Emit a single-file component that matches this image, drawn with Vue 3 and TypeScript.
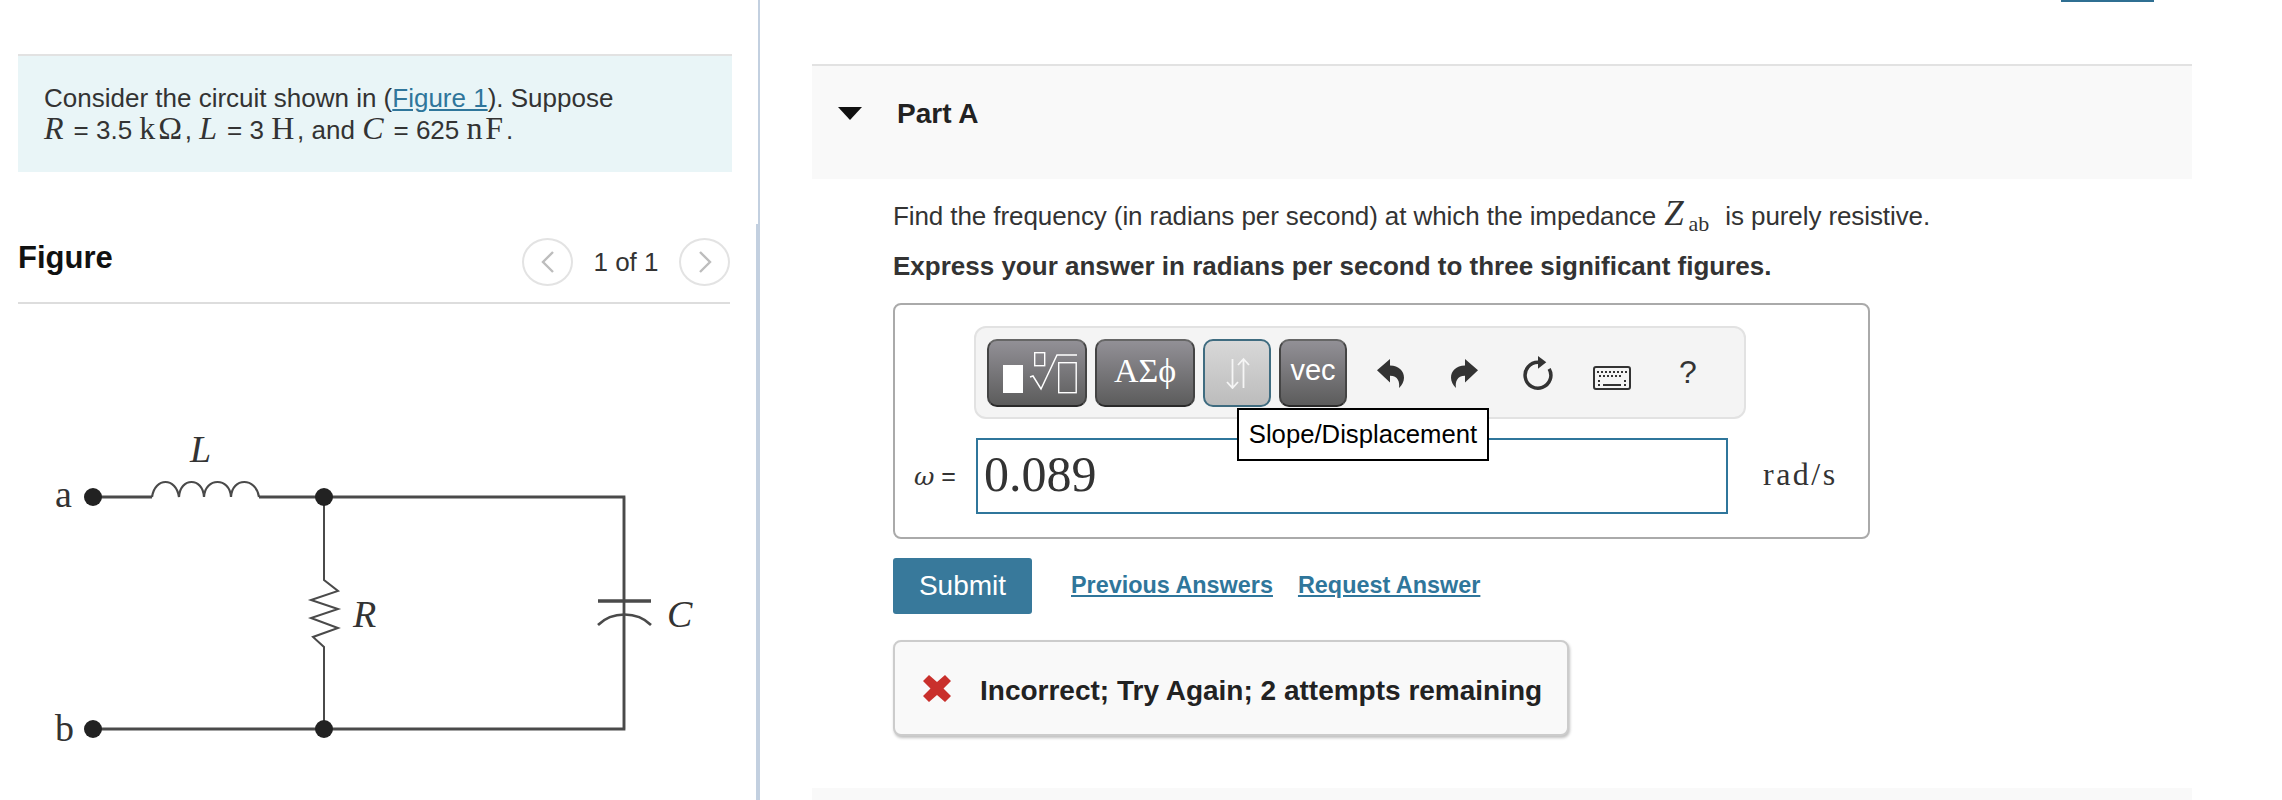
<script setup lang="ts">
const keyRows: number[][] = [
  [4, 8, 12, 16, 20, 24, 28, 32],
  [6, 10, 14, 18, 22, 26],
]
</script>

<template>
  <div class="page">
    <section class="left">
      <div class="note">
        <p>Consider the circuit shown in (<a class="link">Figure 1</a>). Suppose</p>
        <p class="mline"><i class="m">R</i> = 3.5 <span class="m">kΩ</span>, <i class="m">L</i> = 3 <span class="m">H</span>, and <i class="m">C</i> = 625 <span class="m">nF</span>.</p>
      </div>
      <header class="fig-head">
        <h2>Figure</h2>
        <div class="pager">
          <span class="circle">
            <svg width="14" height="22" viewBox="0 0 14 22"><path d="M12 1 2 11l10 10" fill="none" stroke="#bdbdbd" stroke-width="2.4"/></svg>
          </span>
          <span class="count">1 of 1</span>
          <span class="circle">
            <svg width="14" height="22" viewBox="0 0 14 22"><path d="m2 1 10 10L2 21" fill="none" stroke="#bdbdbd" stroke-width="2.4"/></svg>
          </span>
        </div>
      </header>
      <svg class="circuit" width="660" height="360" viewBox="50 425 660 360">
        <g fill="none" stroke="#4a4a4a">
          <path d="M93 497h59M259 497h365v232H93" stroke-width="2.8"/>
          <path d="M324 497v83l14 11-27 9 27 9-27 9 27 10-25 9 11 10v82" stroke-width="2"/>
          <path d="M152 497c3-20 24-20 27 0c1-20 24-20 25 0c1-20 26-20 27 0c1-20 25-20 28 0" stroke-width="2.2"/>
          <path d="M624 497v104M624 616v113" stroke-width="2.2"/>
          <path d="M598 601h53" stroke-width="3.4"/>
          <path d="M598 625c14-14 39-14 53 0" stroke-width="2.6"/>
        </g>
        <g fill="#222">
          <circle cx="93" cy="497" r="9"/>
          <circle cx="93" cy="729" r="9"/>
          <circle cx="324" cy="497" r="9"/>
          <circle cx="324" cy="729" r="9"/>
        </g>
        <g class="clabel">
          <text x="55" y="507">a</text>
          <text x="55" y="741">b</text>
          <text x="190" y="462" class="it">L</text>
          <text x="353" y="627" class="it">R</text>
          <text x="667" y="627" class="it">C</text>
        </g>
      </svg>
    </section>

    <div class="rule"><span class="rule-top"></span><span class="rule-bottom"></span></div>

    <main class="right">
      <div class="topbar"><span class="topmark"></span></div>
      <div class="part-head">
        <span class="tri"></span>
        <h3>Part A</h3>
      </div>
      <div class="part-body">
        <p class="q">Find the frequency (in radians per second) at which the impedance <i class="m z">Z</i><sub class="m">ab</sub> is purely resistive.</p>
        <p class="strong">Express your answer in radians per second to three significant figures.</p>

        <div class="answer">
          <div class="toolbar">
            <button class="tb wide">
              <svg width="80" height="44" viewBox="0 0 80 44">
                <rect x="6" y="14" width="20" height="28" fill="#fff"/>
                <rect x="37.700" y="1.700" width="10" height="13" fill="none" stroke="#fff" stroke-width="1.400"/>
                <path d="M33 26l3-1 8 13 16-34h20" fill="none" stroke="#fff" stroke-width="1.500"/>
                <rect x="61.700" y="11.700" width="17.500" height="30" fill="none" stroke="#fff" stroke-width="1.400"/>
              </svg>
            </button>
            <button class="tb wide greek">ΑΣϕ</button>
            <button class="tb narrow on">
              <svg width="28" height="32" viewBox="0 0 28 32">
                <path d="M9.500 2v29M4 25l5.500 6 5.500-6M20.500 31V2M15 8l5.500-6L26 8" fill="none" stroke="#f5f5f5" stroke-width="1.800"/>
              </svg>
            </button>
            <button class="tb narrow vec">vec</button>
            <span class="ic first">
              <svg width="27" height="30" viewBox="0 0 27 32" preserveAspectRatio="none"><path d="M0 13 13 1v7c9 0 14 6 14 13 0 4-2 8-5 11 1-6-1-13-9-13v7Z" fill="#333"/></svg>
            </span>
            <span class="ic">
              <svg width="27" height="30" viewBox="0 0 27 32" preserveAspectRatio="none"><path d="M27 13 14 1v7C5 8 0 14 0 21c0 4 2 8 5 11-1-6 1-13 9-13v7Z" fill="#333"/></svg>
            </span>
            <span class="ic">
              <svg width="32" height="35" viewBox="0 0 34 38">
                <path d="M29.100 15A14 14 0 1 1 17 8" fill="none" stroke="#333" stroke-width="3.800"/>
                <path d="M17 1l9 7-9 7Z" fill="#333"/>
              </svg>
            </span>
            <span class="ic kb">
              <svg width="38" height="24" viewBox="0 0 38 24">
                <rect x="1" y="1" width="36" height="22" rx="2" fill="#f4f4f4" stroke="#333" stroke-width="2"/>
                <g v-for="(row, r) in keyRows" :key="r">
                  <rect v-for="x in row" :key="x" :x="x" :y="5 + r * 4" width="2" height="2" fill="#333"/>
                </g>
                <path d="M5 14h2v2H5ZM31 14h2v2h-2ZM5 18h2v2H5ZM10 18h18v2H10ZM31 18h2v2h-2Z" fill="#333"/>
              </svg>
            </span>
            <span class="ic help">?</span>
          </div>
          <div class="entry">
            <span class="lhs"><i class="omega">ω</i> =</span>
            <div class="field">0.089</div>
            <span class="unit">rad/s</span>
          </div>
          <div class="tip">Slope/Displacement</div>
        </div>

        <div class="actions">
          <button class="submit">Submit</button>
          <a class="act">Previous Answers</a>
          <a class="act">Request Answer</a>
        </div>

        <div class="feedback">
          <svg width="28" height="27" viewBox="0 0 28 27"><path d="M0 6 6 0l8 7 8-7 6 6-7.500 7.500L28 21l-6 6-8-7-8 7-6-6 7.500-7.500Z" fill="#c9302c"/></svg>
          <strong>Incorrect; Try Again; 2 attempts remaining</strong>
        </div>
      </div>
      <div class="next-part"></div>
    </main>
  </div>
</template>

<style>
html, body { margin: 0; overflow: hidden; background: #fff; }
</style>

<style scoped>
.page {
  display: flex;
  width: 2282px;
  height: 800px;
  overflow: hidden;
  font-family: "Liberation Sans", Arial, sans-serif;
  color: #333;
  background: #fff;
}
p, h2, h3 { margin: 0; }
.m { font-family: "Liberation Serif", serif; }

.left { width: 756px; flex: none; box-sizing: border-box; padding: 54px 0 0 18px; }
.note {
  box-sizing: border-box;
  width: 714px;
  height: 118px;
  border-top: 2px solid #e2e2e2;
  background: #e9f5f7;
  padding: 26px 26px 0;
  font-size: 26px;
  line-height: 32px;
}
.mline { white-space: nowrap; }
.note .m { font-size: 32px; line-height: 0; letter-spacing: 2.800px; }
.link { color: #2f769b; text-decoration: underline; }

.fig-head {
  display: flex;
  align-items: center;
  justify-content: space-between;
  height: 130px;
  width: 712px;
  border-bottom: 2px solid #ddd;
}
.fig-head h2 { font-size: 31px; color: #111; margin-top: 41px; }
.pager { display: flex; align-items: center; margin-top: 50px; }
.circle {
  box-sizing: border-box;
  width: 51px;
  height: 48px;
  border: 2px solid #e3e3e3;
  border-radius: 50%;
  display: flex;
  align-items: center;
  justify-content: center;
}
.count { width: 106px; text-align: center; font-size: 26px; }

.circuit { display: block; margin: 121px 0 0 32px; }
.clabel text { font-family: "Liberation Serif", serif; font-size: 38px; fill: #333; }
.clabel .it { font-style: italic; }

.rule { width: 4px; flex: none; display: flex; flex-direction: column; }
.rule-top { display: block; height: 224px; width: 2px; margin-left: 2px; background: #c3d0e0; }
.rule-bottom { display: block; flex: 1; background: #c3d0e0; }

.right { width: 1380px; margin-left: 52px; flex: none; }
.topbar { height: 64px; position: relative; }
.topmark { display: block; width: 93px; height: 2px; margin-left: 1249px; background: #2f6f92; }
.part-head {
  box-sizing: border-box;
  height: 115px;
  border-top: 2px solid #e2e2e2;
  background: #f9f9f9;
  display: flex;
  align-items: center;
  padding-left: 26px;
  padding-bottom: 18px;
}
.tri {
  width: 0; height: 0;
  border-left: 12px solid transparent;
  border-right: 12px solid transparent;
  border-top: 13px solid #111;
  margin-right: 35px;
}
.part-head h3 { font-size: 28px; color: #222; }

.part-body { padding: 0 0 0 81px; height: 609px; box-sizing: border-box; }
.q { font-size: 26px; letter-spacing: -.09px; line-height: 32px; padding-top: 21px; white-space: nowrap; }
.q .z { font-size: 35px; line-height: 0; margin: 0 5px 0 1px; }
.q sub { font-size: 22px; line-height: 0; vertical-align: -6px; margin-right: 9px; }
.strong { font-size: 26px; font-weight: bold; line-height: 32px; margin-top: 18px; }

.answer {
  position: relative;
  box-sizing: border-box;
  width: 977px;
  height: 236px;
  margin-top: 21px;
  border: 2px solid #aaa;
  border-radius: 8px;
}
.toolbar {
  box-sizing: border-box;
  position: relative;
  width: 772px;
  height: 93px;
  margin: 21px 0 0 79px;
  display: flex;
  align-items: center;
  padding: 0 0 0 11px;
  background: #f4f4f4;
  border: 2px solid #e2e2e2;
  border-radius: 12px;
}
.tb {
  box-sizing: border-box;
  height: 68px;
  border-radius: 10px;
  border: 2px solid #444;
  border-top-color: #666;
  border-bottom-color: #2a2a2a;
  background: linear-gradient(#929096, #5c5c5c);
  color: #fff;
  display: flex;
  align-items: center;
  justify-content: center;
  padding: 0;
  margin-right: 8px;
  flex: none;
}
.wide { width: 100px; }
.narrow { width: 68px; }
.greek { font-family: "Liberation Serif", serif; font-size: 34px; padding-bottom: 4px; }
.vec { font-family: "Liberation Sans", sans-serif; font-size: 29px; padding-bottom: 5px; }
.on { background: linear-gradient(#d8d8d8, #bcbcbc); border-color: #3f6c80; }
.ic {
  width: 74px;
  flex: none;
  display: flex;
  align-items: center;
  justify-content: center;
  color: #333;
}
.first { margin-left: -2px; }
.kb { padding-top: 10px; }
.help { font-size: 32px; padding-left: 2px; }

.entry { display: flex; align-items: center; margin-top: 19px; height: 76px; }
.lhs { width: 81px; padding-left: 19px; box-sizing: border-box; font-size: 25px; white-space: nowrap; }
.omega { font-family: "DejaVu Serif", serif; font-size: 25px; }
.field {
  box-sizing: border-box;
  width: 752px;
  height: 76px;
  border: 2px solid #2f769b;
  padding-left: 6px;
  font-family: "Liberation Serif", serif;
  font-size: 50px;
  line-height: 68px;
}
.unit { font-family: "Liberation Serif", serif; font-size: 32px; letter-spacing: 2.500px; margin: -3px 0 0 35px; }
.tip {
  position: absolute;
  left: 342px;
  top: 103px;
  box-sizing: border-box;
  width: 252px;
  height: 53px;
  border: 2px solid #000;
  background: #fff;
  color: #000;
  font-size: 25.700px;
  line-height: 49px;
  text-align: center;
  white-space: nowrap;
}

.actions { display: flex; align-items: center; margin-top: 19px; height: 56px; }
.submit {
  box-sizing: border-box;
  width: 139px;
  height: 56px;
  border: 0;
  border-radius: 3px;
  background: #38799b;
  color: #fff;
  font-family: "Liberation Sans", sans-serif;
  font-size: 28px;
  padding: 0;
}
.act { color: #2f769b; font-size: 23.400px; font-weight: bold; text-decoration: underline; margin-left: 39px; margin-bottom: 2px; }
.act + .act { margin-left: 25px; }

.feedback {
  box-sizing: border-box;
  width: 676px;
  height: 96px;
  margin-top: 26px;
  display: flex;
  align-items: center;
  gap: 29px;
  padding-left: 28px;
  border: 2px solid #ccc;
  border-radius: 8px;
  background: #f9f9f9;
  box-shadow: 1px 2px 3px rgba(0,0,0,.25);
}
.feedback strong { font-size: 28px; color: #222; white-space: nowrap; margin-top: 6px; }
.next-part { height: 60px; background: #f9f9f9; }
</style>
